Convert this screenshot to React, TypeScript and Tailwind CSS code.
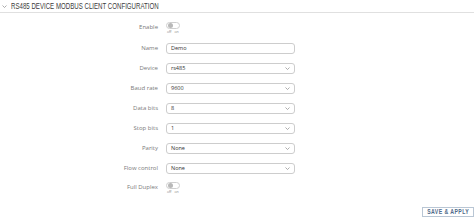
import React from 'react';

const labelCls =
  "w-[158px] shrink-0 text-right text-[6px] leading-[11px] text-[#7a7a7a] font-['Open_Sans',sans-serif]";

const Chevron = () => (
  <svg width="5" height="3" viewBox="0 0 5 3" className="shrink-0">
    <path d="M0.5 0.5 L2.5 2.5 L4.5 0.5" fill="none" stroke="#8a8a8a" strokeWidth="0.7" />
  </svg>
);

const Toggle = () => (
  <div className="flex flex-col w-[15px]">
    <div className="h-[7px] w-[14px] rounded-full border border-[#cfcfcf] bg-white flex items-center pl-[1px]">
      <div className="h-[5px] w-[5px] rounded-full bg-[#b9b9b9]" />
    </div>
    <div className="flex gap-[3px] pl-[1px] text-[3.5px] leading-[5px] text-[#888] font-['Open_Sans',sans-serif]">
      <span>off</span>
      <span>on</span>
    </div>
  </div>
);

const ToggleRow = ({ label }: { label: string }) => (
  <div className="flex items-start gap-[8px]">
    <div className={labelCls + ' leading-[9px]'}>{label}</div>
    <Toggle />
  </div>
);

const Field = ({ label, value, select }: { label: string; value: string; select?: boolean }) => (
  <div className="flex items-center gap-[8px]">
    <div className={labelCls}>{label}</div>
    <div className="h-[11px] w-[129px] rounded-[3px] border border-[#cdcdcd] bg-white flex items-center justify-between pl-[4px] pr-[4px]">
      <span className="text-[5.5px] font-medium text-[#333] font-['Open_Sans',sans-serif]">{value}</span>
      {select && <Chevron />}
    </div>
  </div>
);

export default function App() {
  return (
    <div className="w-[474px] h-[217px] bg-white overflow-hidden flex flex-col">
      <div className="h-[13px] shrink-0 flex items-center gap-[4px] pl-[2px] border-b border-[#e0e0e0]">
        <Chevron />
        <span className="inline-block whitespace-nowrap origin-left scale-x-[0.72] text-[8.5px] leading-none text-[#3d3d3d] font-['Liberation_Sans',sans-serif]">
          RS485 DEVICE MODBUS CLIENT CONFIGURATION
        </span>
      </div>
      <div className="flex flex-col gap-[9px] pt-[9px]">
        <ToggleRow label="Enable" />
        <Field label="Name" value="Demo" />
        <Field label="Device" value="rs485" select />
        <Field label="Baud rate" value="9600" select />
        <Field label="Data bits" value="8" select />
        <Field label="Stop bits" value="1" select />
        <Field label="Parity" value="None" select />
        <Field label="Flow control" value="None" select />
        <div className="-mt-[1px]">
          <ToggleRow label="Full Duplex" />
        </div>
      </div>
      <div className="flex-1" />
      <div className="flex justify-end">
        <button className="h-[10px] w-[52px] border border-[#b9c6d4] bg-white flex items-center justify-center overflow-hidden">
          <span className="inline-block whitespace-nowrap scale-x-[0.8] text-[6.5px] leading-none font-bold tracking-[0.5px] text-[#4f6a8a] font-['Liberation_Sans',sans-serif]">
            SAVE &amp; APPLY
          </span>
        </button>
      </div>
    </div>
  );
}
